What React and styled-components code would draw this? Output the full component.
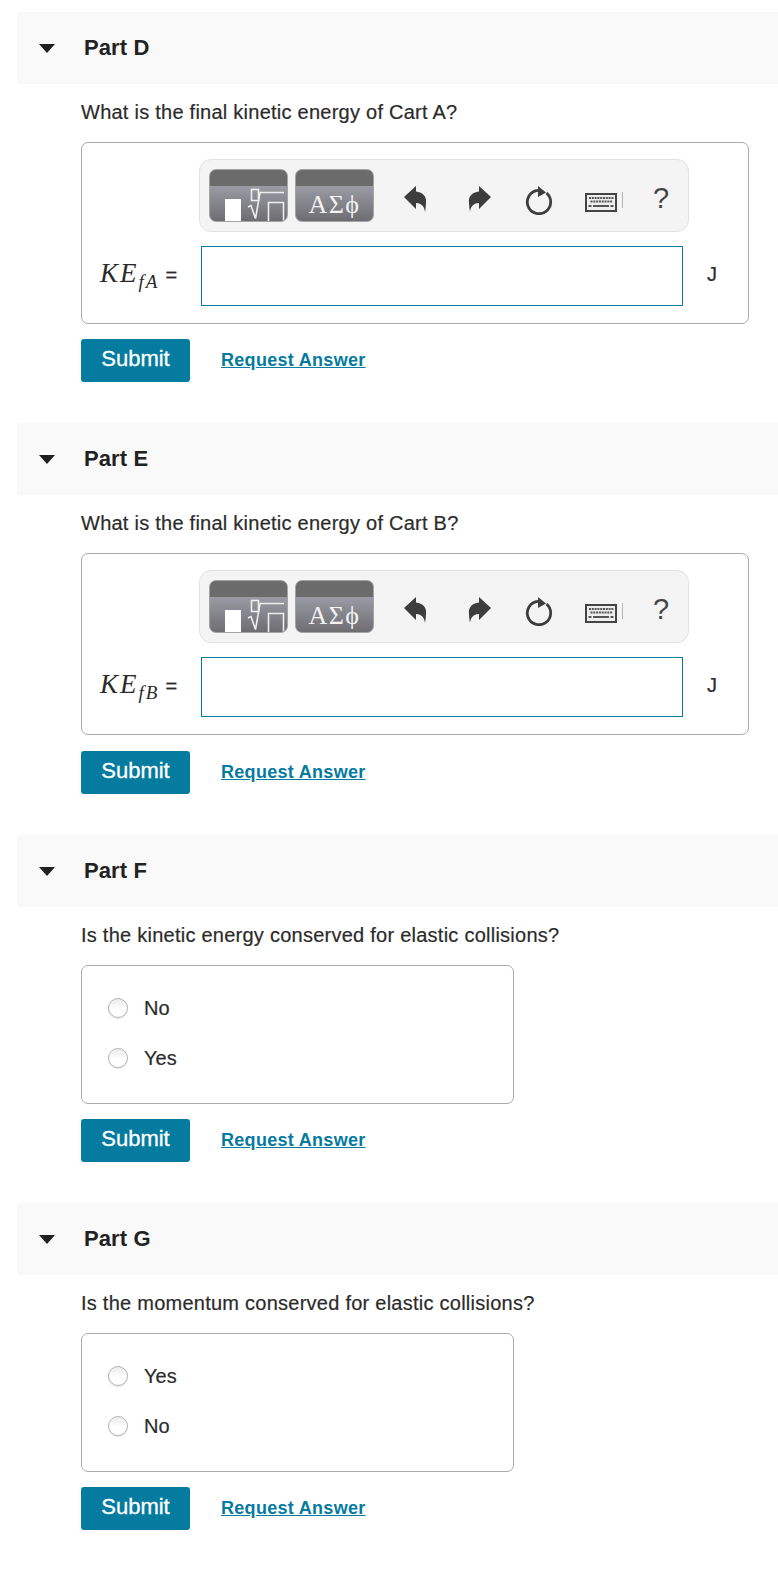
import styled, { createGlobalStyle } from "styled-components";

const GlobalStyle = createGlobalStyle`
  body {
    margin: 0;
    background: #fff;
    color: #2b2b2b;
    font-family: "Liberation Sans", Arial, sans-serif;
  }
`;

const Page = styled.div`
  padding: 12px 0 44px 17px;
  display: flex;
  flex-direction: column;
  gap: 41px;
`;

const PartHeader = styled.div`
  height: 72px;
  background: #f9f9f9;
  display: flex;
  align-items: center;
  padding-left: 22px;
`;

const Caret = styled.span`
  width: 0;
  height: 0;
  border-left: 8px solid transparent;
  border-right: 8px solid transparent;
  border-top: 9px solid #1f1f1f;
`;

const PartTitle = styled.h2`
  margin: 0 0 0 29px;
  font-size: 22px;
  font-weight: 700;
  letter-spacing: 0.1px;
  color: #222;
`;

const Body = styled.div`
  padding-left: 64px;
`;

const Question = styled.p`
  margin: 0;
  padding-top: 16px;
  height: 58px;
  box-sizing: border-box;
  font-size: 20px;
  line-height: 24px;
  letter-spacing: 0.25px;
  -webkit-text-stroke: 0.2px;
`;

const AnswerBox = styled.div`
  width: 668px;
  height: 182px;
  box-sizing: border-box;
  border: 1px solid #aaa;
  border-radius: 7px;
  padding: 16px 0 0 19px;
`;

const Toolbar = styled.div`
  width: 490px;
  height: 73px;
  box-sizing: border-box;
  margin-left: 98px;
  padding-left: 9px;
  background: #f4f4f4;
  border: 1px solid #e2e2e2;
  border-radius: 12px;
  display: flex;
  align-items: center;
  gap: 7px;
`;

const PaletteButton = styled.div`
  width: 79px;
  height: 53px;
  box-sizing: border-box;
  border: 1px solid #a4a4a4;
  border-radius: 7px;
  overflow: hidden;
  position: relative;
  display: flex;
  align-items: flex-end;
  justify-content: center;
  color: #f2f2f2;
  background: linear-gradient(#6b6b6b 0 16px, #9b9ba6 16px, #6d6d71 100%);
  font-family: "Liberation Serif", serif;
  font-size: 26px;
  line-height: 33px;
  letter-spacing: 1.5px;
`;

const ToolIcon = styled.div`
  width: ${(p) => p.$width}px;
  display: flex;
  justify-content: center;
  color: #3d3d3d;
  margin-left: ${(p) => p.$offset || 0}px;
  padding-top: ${(p) => p.$shift || 0}px;
`;

const Separator = styled.span`
  width: 1px;
  height: 16px;
  margin: 8px 0 0 -2px;
  background: #b5b5b5;
`;

const Help = styled.span`
  font-size: 29px;
  color: #444;
  margin-left: 23px;
  padding-top: 6px;
`;

const MathRow = styled.div`
  display: flex;
  align-items: center;
  margin-top: 14px;
`;

const MathLabel = styled.div`
  width: 100px;
  margin-bottom: 6px;
  margin-left: -1px;
  margin-right: 1px;
  font-family: "Liberation Serif", serif;
  font-size: 27px;
  font-style: italic;
  letter-spacing: 2px;
  color: #2b2b2b;
  white-space: nowrap;
`;

const MathSub = styled.sub`
  font-size: 19px;
  line-height: 0;
  letter-spacing: 2px;
`;

const Equals = styled.span`
  font-family: "Liberation Sans", sans-serif;
  font-style: normal;
  font-size: 20px;
  letter-spacing: 0;
  margin-left: 6px;
  -webkit-text-stroke: 0.3px;
`;

const AnswerInput = styled.input`
  width: 482px;
  height: 60px;
  box-sizing: border-box;
  border: 1px solid #057b9f;
  outline: none;
  background: #fff;
`;

const Unit = styled.span`
  margin: 0 0 4px 24px;
  font-size: 20px;
  -webkit-text-stroke: 0.2px;
`;

const ChoiceBox = styled.div`
  width: 433px;
  height: 139px;
  box-sizing: border-box;
  border: 1px solid #aaa;
  border-radius: 7px;
  padding: 22px 0 0 26px;
  display: flex;
  flex-direction: column;
  gap: 10px;
`;

const Choice = styled.label`
  height: 40px;
  display: flex;
  align-items: center;
  gap: 16px;
  font-size: 20px;
  -webkit-text-stroke: 0.2px;
`;

const Radio = styled.input`
  appearance: none;
  width: 20px;
  height: 20px;
  margin: 0;
  border: 1px solid #b4b4b4;
  border-radius: 50%;
  background: linear-gradient(#ececec, #fff 55%);
  box-shadow: 0 1px 1px rgba(0, 0, 0, 0.12);
`;

const Actions = styled.div`
  display: flex;
  align-items: center;
  margin-top: ${(p) => p.$gap}px;
  gap: 31px;
`;

const SubmitButton = styled.button`
  width: 109px;
  height: 43px;
  border: none;
  border-radius: 3px;
  background: #057b9f;
  color: #fff;
  font-family: inherit;
  font-size: 22px;
  -webkit-text-stroke: 0.3px;
  padding: 0 0 4px;
`;

const RequestLink = styled.a`
  color: #057b9f;
  font-size: 18px;
  font-weight: 700;
  letter-spacing: 0.3px;
  text-decoration: underline;
`;

function TemplateGlyph() {
  return (
    <svg width="79" height="53" viewBox="0 0 79 53" style={{ position: "absolute", left: -1, top: -1 }}>
      <rect x="16" y="30" width="16" height="23" fill="#fff" />
      <g fill="none" stroke="#eee" strokeWidth="1.6">
        <rect x="42.500" y="20.500" width="7" height="11" />
        <path d="M39 38l3-1.500 4.500 13L51 23.500h24" />
        <path d="M59.500 53V33.500h15V53" />
      </g>
    </svg>
  );
}

function UndoIcon({ flip }) {
  return (
    <svg width="24" height="26" viewBox="0 0 24 26" style={flip ? { transform: "scaleX(-1)" } : undefined}>
      <path
        d="M0 11L12 0v5.500C19 6 23 11 22 17c0 3-.5 6-1 9-.5-4-2-8.500-9-9v6z"
        fill="currentColor"
      />
    </svg>
  );
}

function ResetIcon() {
  return (
    <svg width="30" height="32" viewBox="0 0 30 32">
      <path d="M22.500 10A11.700 11.700 0 1 1 14 7.300" fill="none" stroke="currentColor" strokeWidth="2.800" />
      <path d="M14 3l8 6.500-8 4.500z" fill="currentColor" />
    </svg>
  );
}

function KeyboardIcon() {
  const keys = [];
  for (let i = 0; i < 9; i++) keys.push(<rect key={`a${i}`} x={4 + i * 2.8} y="4" width="2" height="2" />);
  for (let i = 0; i < 8; i++) keys.push(<rect key={`b${i}`} x={5.500 + i * 2.8} y="7.500" width="2" height="2" />);
  return (
    <svg width="32" height="19" viewBox="0 0 32 19">
      <rect x="1" y="1" width="30" height="17" fill="#eee" stroke="#444" strokeWidth="2" />
      <g fill="#555">
        {keys}
        <rect x="3.500" y="12" width="3" height="2" />
        <rect x="8" y="12" width="16" height="2" />
        <rect x="25.500" y="12" width="3" height="2" />
      </g>
    </svg>
  );
}

function MathToolbar() {
  return (
    <Toolbar>
      <PaletteButton>
        <TemplateGlyph />
      </PaletteButton>
      <PaletteButton>ΑΣϕ</PaletteButton>
      <ToolIcon $width={56} $offset={7} $shift={7}>
        <UndoIcon />
      </ToolIcon>
      <ToolIcon $width={56} $shift={7}>
        <UndoIcon flip />
      </ToolIcon>
      <ToolIcon $width={56} $offset={-3} $shift={7}>
        <ResetIcon />
      </ToolIcon>
      <ToolIcon $width={32} $offset={11} $shift={14}>
        <KeyboardIcon />
      </ToolIcon>
      <Separator />
      <Help>?</Help>
    </Toolbar>
  );
}

function Actionbar({ gap }) {
  return (
    <Actions $gap={gap}>
      <SubmitButton>Submit</SubmitButton>
      <RequestLink href="#">Request Answer</RequestLink>
    </Actions>
  );
}

function MathPart({ title, question, sub, gap }) {
  return (
    <section>
      <PartHeader>
        <Caret />
        <PartTitle>{title}</PartTitle>
      </PartHeader>
      <Body>
        <Question>{question}</Question>
        <AnswerBox>
          <MathToolbar />
          <MathRow>
            <MathLabel>
              KE<MathSub>{sub}</MathSub>
              <Equals>=</Equals>
            </MathLabel>
            <AnswerInput />
            <Unit>J</Unit>
          </MathRow>
        </AnswerBox>
        <Actionbar gap={gap} />
      </Body>
    </section>
  );
}

function ChoicePart({ title, question, options }) {
  return (
    <section>
      <PartHeader>
        <Caret />
        <PartTitle>{title}</PartTitle>
      </PartHeader>
      <Body>
        <Question>{question}</Question>
        <ChoiceBox>
          {options.map((option) => (
            <Choice key={option}>
              <Radio type="radio" name={title} />
              {option}
            </Choice>
          ))}
        </ChoiceBox>
        <Actionbar gap={15} />
      </Body>
    </section>
  );
}

export default function App() {
  return (
    <>
      <GlobalStyle />
      <Page>
        <MathPart title="Part D" question="What is the final kinetic energy of Cart A?" sub="fA" gap={15} />
        <MathPart title="Part E" question="What is the final kinetic energy of Cart B?" sub="fB" gap={16} />
        <ChoicePart title="Part F" question="Is the kinetic energy conserved for elastic collisions?" options={["No", "Yes"]} />
        <ChoicePart title="Part G" question="Is the momentum conserved for elastic collisions?" options={["Yes", "No"]} />
      </Page>
    </>
  );
}
